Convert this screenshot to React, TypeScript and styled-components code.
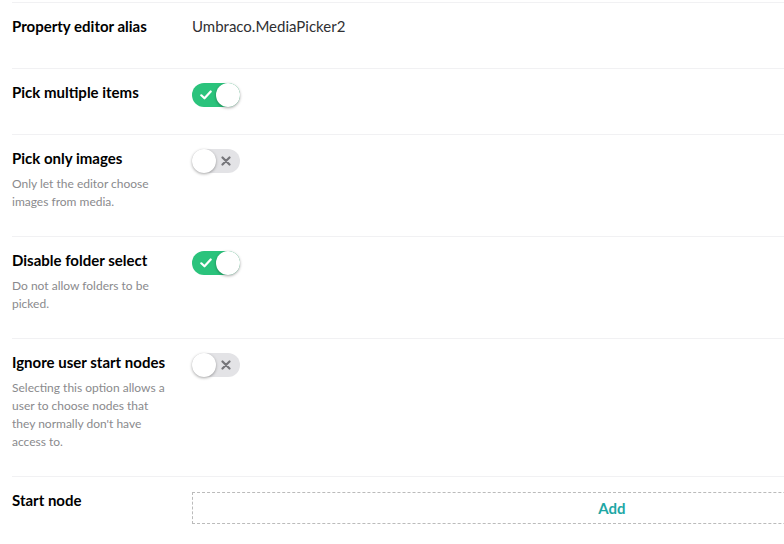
import styled, { createGlobalStyle } from "styled-components";

const GlobalStyle = createGlobalStyle`
  html, body {
    margin: 0;
    padding: 0;
    background: #fff;
    overflow: hidden;
  }
  body {
    font-family: Lato, "Open Sans", sans-serif;
    color: #1b1b1b;
  }
`;

type Setting = {
  label: string;
  description?: string;
  kind: "text" | "toggle" | "picker";
  value?: string;
  checked?: boolean;
};

const settings: Setting[] = [
  { label: "Property editor alias", kind: "text", value: "Umbraco.MediaPicker2" },
  { label: "Pick multiple items", kind: "toggle", checked: true },
  {
    label: "Pick only images",
    description: "Only let the editor choose images from media.",
    kind: "toggle",
    checked: false,
  },
  {
    label: "Disable folder select",
    description: "Do not allow folders to be picked.",
    kind: "toggle",
    checked: true,
  },
  {
    label: "Ignore user start nodes",
    description:
      "Selecting this option allows a user to choose nodes that they normally don't have access to.",
    kind: "toggle",
    checked: false,
  },
  { label: "Start node", kind: "picker" },
];

const Toggle = ({ checked }: { checked?: boolean }) => (
  <ToggleTrack $on={!!checked}>
    <ToggleIcon $side="left">
      <svg width="12" height="10" viewBox="0 0 12 10">
        <path
          d="M1.3 5.3 L4.5 8.3 L10.7 1.5"
          fill="none"
          stroke="#fff"
          strokeWidth="2.2"
          strokeLinecap="round"
          strokeLinejoin="round"
        />
      </svg>
    </ToggleIcon>
    <ToggleIcon $side="right">
      <svg width="10" height="10" viewBox="0 0 10 10">
        <path
          d="M1.5 1.5 L8.5 8.5 M8.5 1.5 L1.5 8.5"
          fill="none"
          stroke="#76767a"
          strokeWidth="2.2"
          strokeLinecap="round"
        />
      </svg>
    </ToggleIcon>
    <Knob $on={!!checked} />
  </ToggleTrack>
);

const App = () => {
  return (
    <>
      <GlobalStyle />
      <Page>
        {settings.map(item => (
          <Row key={item.label}>
            <LabelColumn>
              <Label>{item.label}</Label>
              {item.description && <Description>{item.description}</Description>}
            </LabelColumn>
            <Control>
              {item.kind === "text" && <Value>{item.value}</Value>}
              {item.kind === "toggle" && <Toggle checked={item.checked} />}
              {item.kind === "picker" && <AddButton>Add</AddButton>}
            </Control>
          </Row>
        ))}
      </Page>
    </>
  );
};

const Page = styled.div`
  width: 1020px;
  padding: 2px 0 0 12px;
`;

const Row = styled.div`
  display: flex;
  gap: 20px;
  border-top: 1px solid #f1f1f3;
  padding: 13px 0 25px;
`;

const LabelColumn = styled.div`
  width: 160px;
  flex-shrink: 0;
  min-height: 27px;
`;

const Label = styled.div`
  font-size: 15px;
  font-weight: 700;
  line-height: 20px;
  color: #000;
`;

const Description = styled.div`
  margin-top: 7px;
  font-size: 12px;
  line-height: 18px;
  color: #8a8a8d;
`;

const Control = styled.div`
  flex: 1;
  padding-top: 1px;
`;

const Value = styled.div`
  margin-top: -1px;
  font-size: 15px;
  line-height: 20px;
  color: #303033;
`;

const ToggleTrack = styled.div<{ $on: boolean }>`
  position: relative;
  width: 48px;
  height: 24px;
  border-radius: 12px;
  background: ${p => (p.$on ? "#2bc37c" : "#e3e3e6")};
`;

const ToggleIcon = styled.span<{ $side: "left" | "right" }>`
  position: absolute;
  top: 0;
  bottom: 0;
  ${p => (p.$side === "left" ? "left: 8px;" : "right: 9px;")}
  display: flex;
  align-items: center;
`;

const Knob = styled.span<{ $on: boolean }>`
  position: absolute;
  top: 0;
  left: ${p => (p.$on ? "24px" : "0")};
  width: 24px;
  height: 24px;
  border-radius: 50%;
  background: #fff;
  box-shadow: 0 1px 3px rgba(0, 0, 0, 0.35);
`;

const AddButton = styled.button`
  display: block;
  width: 100%;
  height: 32px;
  margin-top: 1px;
  border: 1px dashed #bbbbbb;
  background: #fff;
  font-family: Lato, "Open Sans", sans-serif;
  font-size: 15px;
  font-weight: 700;
  color: #1ea7a5;
  cursor: pointer;
`;

export default App;
